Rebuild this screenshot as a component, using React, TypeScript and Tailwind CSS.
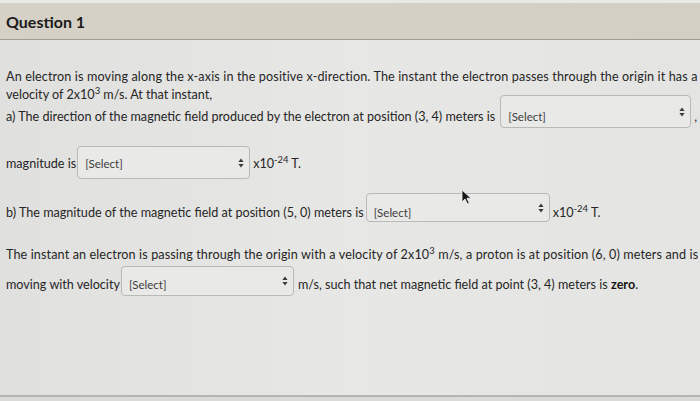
import React from "react";

const Arrows = () => (
  <svg width="6" height="10" viewBox="0 0 6 10" className="absolute right-[5px] top-1/2 -translate-y-1/2">
    <path d="M3 0.5 L5.6 4 L0.4 4 Z" fill="#3a3a3a" />
    <path d="M3 9.5 L5.6 6 L0.4 6 Z" fill="#3a3a3a" />
  </svg>
);

function Sel({ className }: { className: string }) {
  return (
    <div
      className={
        "relative inline-flex shrink-0 rounded-[4px] border border-[#b9b9b7] bg-[#e9e9e7] pl-[7px] leading-[18px] " +
        className
      }
    >
      <span className="text-[11.5px] text-[#3d3d3d]">[Select]</span>
      <Arrows />
    </div>
  );
}

export default function App() {
  return (
    <div className="relative w-[700px] h-[401px] overflow-hidden bg-gradient-to-r from-[#e0e0de] via-[#e7e7e5] to-[#e4e4e2] font-['Lato',sans-serif] text-[#262626]">
      <div className="h-[3px] bg-[#e9e9e7]" />
      <div className="h-[37px] bg-gradient-to-r from-[#d6d1c6] to-[#d4cfc4] border-b border-[#9f9c96] pl-[6px] flex items-center">
        <span className="text-[16px] font-bold text-[#1a1a1a] mt-[1px]">Question 1</span>
      </div>

      <div className="pl-[6px] text-[12.6px] whitespace-nowrap">
        <div className="mt-[28px] leading-[18px]">
          <div className="tracking-[0.13px]">
            An electron is moving along the x-axis in the positive x-direction. The instant the electron passes through the origin it has a
          </div>
          <div>
            velocity of 2x10<sup>3</sup> m/s. At that instant,
          </div>
        </div>

        <div className="flex items-baseline -mt-[9px]">
          <span>a) The direction of the magnetic field produced by the electron at position (3, 4) meters is</span>
          <Sel className="ml-[5px] w-[191px] h-[33px] pt-[12px]" />
          <span className="ml-[3px]">,</span>
        </div>

        <div className="flex items-baseline mt-[18px]">
          <span>magnitude is</span>
          <Sel className="ml-[1px] w-[173px] h-[33px] pt-[8px]" />
          <span className="ml-[3px]">
            x10<sup>-24</sup> T.
          </span>
        </div>

        <div className="flex items-baseline mt-[14px]">
          <span>b) The magnitude of the magnetic field at position (5, 0) meters is</span>
          <Sel className="ml-[2px] w-[184px] h-[29px] pt-[10px]" />
          <span className="ml-[3px]">
            x10<sup>-24</sup> T.
          </span>
        </div>

        <div className="mt-[23px] leading-[18px] tracking-[0.12px]">
          The instant an electron is passing through the origin with a velocity of 2x10<sup>3</sup> m/s, a proton is at position (6, 0) meters and is
        </div>

        <div className="flex items-baseline mt-[2px]">
          <span>moving with velocity</span>
          <Sel className="ml-[1px] w-[173px] h-[30px] pt-[9px]" />
          <span className="ml-[4px]">
            m/s, such that net magnetic field at point (3, 4) meters is <b className="font-bold text-[#141414]">zero</b>.
          </span>
        </div>
      </div>

      <div className="absolute left-0 right-0 top-[395px] h-[2px] bg-[#b4b4b2]" />
      <div className="absolute left-0 right-0 top-[397px] bottom-0 bg-[#dadad8]" />

      <svg width="12" height="16" viewBox="0 0 12 16" className="absolute left-[461px] top-[189px]">
        <path d="M1 1 L1 13 L4 10 L6.5 15 L8.3 14.2 L5.9 9.3 L10 9.3 Z" fill="#1a1a1a" stroke="#f0f0f0" strokeWidth="0.8" />
      </svg>
    </div>
  );
}
